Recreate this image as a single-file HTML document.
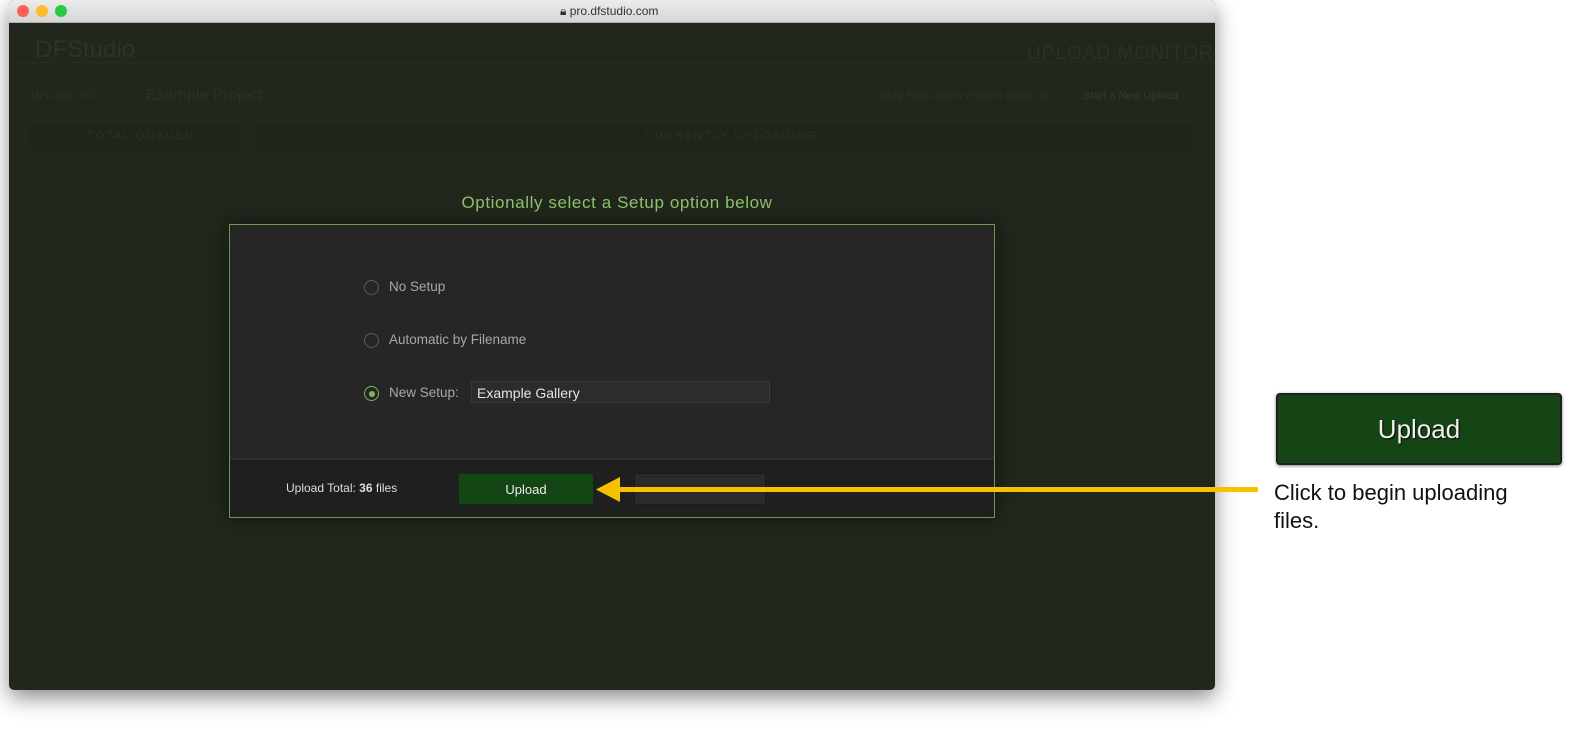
<!DOCTYPE html>
<html><head><style>
body{margin:0;width:1580px;height:736px;background:#fff;position:relative;overflow:hidden;font-family:"Liberation Sans","DejaVu Sans",sans-serif}
.win{position:absolute;left:9px;top:0;width:1206px;height:690px;background:#21271d;box-shadow:0 8px 22px rgba(0,0,0,.45);border-radius:5px;overflow:hidden}
.bar{position:absolute;left:0;top:0;right:0;height:22px;background:linear-gradient(#ececec,#d6d6d6);border-bottom:1px solid #b0b0b0}
.dot{position:absolute;top:5px;width:12px;height:12px;border-radius:50%}
.t{position:absolute;color:#2a3126;font-size:14px;white-space:nowrap}
.abs{position:absolute}
.modal{position:absolute;left:220px;top:224px;width:764px;height:292px;background:#262626;border:1px solid #6c9a4d;box-shadow:0 0 18px rgba(0,0,0,.5)}
.foot{position:absolute;left:0;right:0;bottom:0;height:57px;background:#1f1f1f;border-top:2px solid #2f2f2f}
.radio{position:absolute;width:13px;height:13px;border:1.5px solid #5a5a5a;border-radius:50%}
.lbl{position:absolute;color:#a8a8a8;font-size:13.5px}
</style></head><body>
<div class="win">
 <div class="bar">
  <div class="dot" style="left:8px;background:#fe5f57"></div>
  <div class="dot" style="left:27px;background:#febc2e"></div>
  <div class="dot" style="left:46px;background:#28c840"></div>
  <div class="abs" style="left:551px;top:4px;font-size:12px;color:#333">&#128274;&#xFE0E; pro.dfstudio.com</div>
 </div>
 <div class="t" style="left:26px;top:36px;font-size:24px;color:#2c3428">DFStudio</div>
 <div class="abs" style="left:0;right:0;top:62px;border-top:1px solid #262d22"></div>
 <div class="t" style="left:1018px;top:43px;font-size:19px;letter-spacing:1px">UPLOAD MONITOR</div>
 <div class="t" style="left:22px;top:90px;font-size:11px">UPLOAD TO :</div>
 <div class="t" style="left:137px;top:87px;font-size:16px">Example Project</div>
 <div class="t" style="left:870px;top:90px;font-size:11px;font-style:italic">Drag Files and/or Folders below, or...</div>
 <div class="t" style="left:1074px;top:90px;font-size:11px;color:#333b2f">Start a New Upload</div>
 <div class="abs" style="left:20px;top:124px;width:212px;height:26px;background:#1f251b"></div>
 <div class="abs" style="left:246px;top:124px;width:938px;height:26px;background:#1f251b"></div>
 <div class="t" style="left:78px;top:130px;font-size:11px;letter-spacing:2px">TOTAL QUEUED</div>
 <div class="t" style="left:636px;top:130px;font-size:11px;letter-spacing:2px">CURRENTLY UPLOADING</div>
 <div class="modal">
  <div class="radio" style="left:134px;top:55px"></div><div class="lbl" style="left:159px;top:54px">No Setup</div>
  <div class="radio" style="left:134px;top:108px"></div><div class="lbl" style="left:159px;top:107px">Automatic by Filename</div>
  <div class="radio" style="left:134px;top:161px;border-color:#7fb45f"><div style="position:absolute;left:3.5px;top:3.5px;width:6px;height:6px;border-radius:50%;background:#7fb45f"></div></div>
  <div class="lbl" style="left:159px;top:160px">New Setup:</div>
  <div class="abs" style="left:241px;top:156px;width:297px;height:22px;background:#2c2c2c;border:1px solid #3a3a3a;border-radius:2px;color:#e4e4e4;font-size:14px;line-height:22px;padding-left:5px;box-sizing:border-box;width:299px">Example Gallery</div>
  <div class="foot">
   <div class="abs" style="left:56px;top:21px;color:#ddd;font-size:12px">Upload Total: <b>36</b> files</div>
   <div class="abs" style="left:228px;top:13px;width:136px;height:32px;background:#144514;border:1px solid #0d2c0d;border-radius:2px;color:#eee;font-size:13px;text-align:center;line-height:32px;box-sizing:border-box">Upload</div>
   <div class="abs" style="left:404px;top:13px;width:132px;height:32px;background:#2a2a2a;border:1px solid #1a1a1a;border-radius:2px;box-sizing:border-box"></div>
  </div>
 </div>
 <div class="abs" style="left:0;right:0;top:193px;text-align:center;color:#8cc06a;font-size:17px;letter-spacing:.6px;padding-right:0;width:1216px">Optionally select a Setup option below</div>
</div>
<svg class="abs" style="left:590px;top:476px" width="672" height="28"><rect x="26" y="11" width="642" height="5" fill="#f8c100"/><polygon points="6,13.5 30,1 30,26" fill="#f8c100"/></svg>
<div class="abs" style="left:1276px;top:393px;width:286px;height:72px;background:#154515;border:2px solid #1f1f1f;border-radius:4px;box-sizing:border-box;box-shadow:0 1px 3px rgba(0,0,0,.5);color:#f0f0f0;font-size:26px;text-align:center;line-height:68px;text-shadow:1px 1px 1px #000">Upload</div>
<div class="abs" style="left:1274px;top:479px;font-size:22px;line-height:28px;color:#111">Click to begin uploading<br>files.</div>
</body></html>
